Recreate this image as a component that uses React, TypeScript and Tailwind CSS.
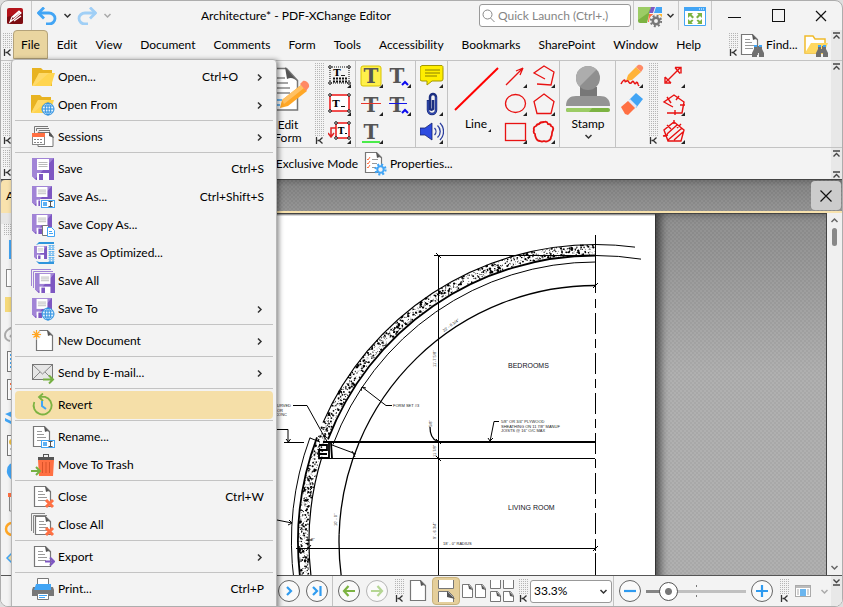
import { ReactNode } from "react";
import clsx from "clsx";

/* ---------- small shared drawings ---------- */

function Icon({ children, size = 24 }: { children: ReactNode; size?: number }) {
  return (
    <svg
      width={size}
      height={size}
      viewBox={`0 0 ${size} ${size}`}
      fill="none"
      className="block shrink-0"
      aria-hidden="true"
    >
      {children}
    </svg>
  );
}

function Chevron({ className = "", stroke = "#333" }) {
  return (
    <svg width="9" height="9" viewBox="0 0 9 9" fill="none" className={clsx("shrink-0", className)}>
      <path d="M1.5 3l3 3 3-3" stroke={stroke} strokeWidth="1.5" />
    </svg>
  );
}

function Grip({ className = "" }) {
  return (
    <div className={clsx("w-[10px] shrink-0 flex flex-col items-center", className)}>
      <div className="w-[9px] flex-1 bg-[conic-gradient(transparent_0_75%,#a6a6a6_75%)] bg-[length:2px_2px] opacity-80" />
      <svg width="9" height="9" viewBox="0 0 9 9" fill="none">
        <path d="M1.5 1v7M7.500 1.500l-3.200 3 3.200 3M4 4.500H2.500" stroke="#333" strokeWidth="1.3" />
      </svg>
    </div>
  );
}

function Separator() {
  return <div className="w-px shrink-0 self-stretch ml-px mr-[2px] bg-[#c3c3c3]" />;
}

function Floppy({ x = 1, y = 1, s = 22 }) {
  return (
    <g transform={`translate(${x} ${y}) scale(${s / 22})`}>
      <path d="M0 0h22v22H4l-4-4z" fill="#7e57c2" />
      <path d="M0 0h22L3 21l-3-3z" fill="#a184d6" />
      <path d="M5 1h12v11H5z" fill="#fff" />
      <path d="M6.500 4.500h9M6.500 6.500h9M6.500 8.500h9" stroke="#b9b9b9" />
      <path d="M5 15h12v7H5z" fill="#fff" />
      <path d="M7 16h4v6H7z" fill="#7e57c2" />
    </g>
  );
}

function Globe({ x = 17, y = 17 }) {
  return (
    <g transform={`translate(${x} ${y})`} stroke="#2b8fe0" strokeWidth="1">
      <circle r="6" fill="#e6f3fd" />
      <ellipse rx="2.800" ry="6" />
      <path d="M-6 0H6M0-6V6M-5-3H5M-5 3H5" />
    </g>
  );
}

function Sheet({ x = 2, y = 1, w = 17, h = 21, lines = true }) {
  return (
    <g transform={`translate(${x} ${y})`}>
      <path d={`M.5 .5h${w - 6}l5 5v${h - 6}H.5z`} fill="#fff" stroke="#777" strokeWidth="1.200" />
      <path d={`M${w - 6} 0l6 7c-2-2-3-2-5-1z`} fill="#555" />
      {lines && <path d={`M4 5.500h5M4 8.500h7M4 11.500h9M4 14.500h8`} stroke="#999" />}
    </g>
  );
}

function RenameBox() {
  return (
    <g>
      <rect x="10.500" y="15.500" width="13" height="7" fill="#fff" stroke="#42a5f5" />
      <path d="M12 17h4v4h-4z" fill="#5fb0f3" />
      <path d="M17.500 16.500h4M19.500 16.500v5M17.500 21.500h4" stroke="#555" />
    </g>
  );
}

function RedCross() {
  return <path d="M15 15l7 7M22 15l-7 7" stroke="#ff7043" strokeWidth="3" />;
}

function FolderShape() {
  return (
    <g>
      <path d="M1 3h9l2 2h9v16H1z" fill="#e8b321" />
      <path d="M1 21L8 8h16l-4 13z" fill="#ffd54f" />
      <path d="M1 21L8 8h10L3 21z" fill="#ffe082" opacity=".5" />
    </g>
  );
}

function Binoculars({ x = 12, y = 12 }) {
  return (
    <g transform={`translate(${x} ${y})`}>
      <path d="M2 1h3v3h1V1h4v3l2 4v4H7V8H5v4H0V8l2-4z" fill="#707070" />
      <path d="M2 0h3v2H2zM7 0h3v2H7z" fill="#42a5f5" />
    </g>
  );
}

/* ---------- File menu ---------- */

const menuIcons: Record<string, ReactNode> = {
  open: <FolderShape />,
  openFrom: (
    <>
      <g transform="translate(-1 -1)"><FolderShape /></g>
      <Globe x={17} y={16} />
    </>
  ),
  sessions: (
    <>
      <path d="M3.500 8V1.500H17M5.500 6V3.500H18M8 6.500V5.500H19" stroke="#777" />
      <path d="M7 7.500h12l3 4V21.500H7z" fill="#fff" stroke="#777" />
      <path d="M18 6l5 7-5-2z" fill="#555" />
      <rect x="1.500" y="8.500" width="12" height="11" fill="#fff" stroke="#888" />
      <path d="M1 8h13v4H1z" fill="#ff7043" />
      <path d="M3 14.500h9M3 17.500h9" stroke="#888" strokeDasharray="2 1" />
    </>
  ),
  save: <Floppy />,
  saveAs: (
    <>
      <Floppy s={20} />
      <path d="M9 14h15v10H9z" fill="#f3f3f3" />
      <RenameBox />
    </>
  ),
  saveCopy: (
    <>
      <Floppy s={20} />
      <path d="M11.500 12.500h5l3 3v7h-8z" fill="#fff" stroke="#777" />
      <path d="M16.500 14.500h4l3 3v6h-7z" fill="#fff" stroke="#42a5f5" />
      <path d="M18 18.500h3M18 20.500h4" stroke="#42a5f5" />
    </>
  ),
  optimized: (
    <>
      <path d="M5 4l3-3h15v2H8zM5 20l3 3h15v-2H8z" fill="#2f95dc" />
      <Floppy x={3} y={5} s={13} />
      <path d="M20.500 4v17" stroke="#8ec9f5" strokeWidth="6" strokeDasharray="1 1" />
      <path d="M19 4v17M22 4v17" stroke="#3f9fe4" strokeDasharray="2 1" />
    </>
  ),
  saveAll: (
    <>
      <path d="M.5 17V.5H20M2.500 19V2.500H22" stroke="#a184d6" />
      <Floppy x={4} y={4} s={20} />
    </>
  ),
  saveTo: (
    <>
      <Floppy s={20} />
      <Globe x={17} y={17} />
    </>
  ),
  newDoc: (
    <>
      <Sheet x={5} y={1} w={17} h={21} lines={false} />
      <circle cx="5.500" cy="5.500" r="5" fill="#f3f3f3" />
      <path d="M5.500 1v9M1 5.500h9M2.500 2.500l6 6M8.500 2.500l-6 6" stroke="#ffa726" strokeWidth="1.200" />
    </>
  ),
  mail: (
    <>
      <rect x="1.500" y="3.500" width="20" height="15" fill="#e6e6e6" stroke="#777" />
      <path d="M2 4l9.500 9L21 4M2 18l7-7M21 18l-7-7" stroke="#888" />
      <path d="M12 18.500h10M18 14.500l4 4-4 4" stroke="#76b043" strokeWidth="2" />
    </>
  ),
  revert: (
    <>
      <path d="M3.300 9A9 9 0 1 0 14 3.800H8" stroke="#7cb342" strokeWidth="1.800" />
      <path d="M12 .5L8 4l4 4" stroke="#7cb342" strokeWidth="1.800" />
      <path d="M11 8v5l4 3" stroke="#42a5f5" strokeWidth="2" />
    </>
  ),
  rename: (
    <>
      <Sheet />
      <RenameBox />
    </>
  ),
  trash: (
    <>
      <path d="M7 4h16v3H7zM12 1h6v3h-6z" fill="#555" />
      <path d="M13 2h4v2h-4z" fill="#f3f3f3" />
      <path d="M7 7h16l-1 16H8z" fill="#ff7043" />
      <path d="M11.500 9v11M15 9v11M18.500 9v11" stroke="#d9532a" />
      <path d="M0 18h9M5 14l4 4-4 4" stroke="#76b043" strokeWidth="2" />
    </>
  ),
  close: (
    <>
      <Sheet x={3} />
      <RedCross />
    </>
  ),
  closeAll: (
    <>
      <path d="M.5 18V.5H14M2.500 20V2.500H16" stroke="#888" />
      <Sheet x={4} y={3} w={16} h={19} />
      <RedCross />
    </>
  ),
  exportDoc: (
    <>
      <Sheet x={3} />
      <path d="M14 16.500h9M19 12.500l4 4-4 4" stroke="#7e57c2" strokeWidth="2" />
    </>
  ),
  print: (
    <>
      <path d="M6.500 1.500h11v8h-11z" fill="#fff" stroke="#777" />
      <path d="M2 10h20l1 3v6H1v-6z" fill="#777" />
      <path d="M5 7h15v6H3z" fill="#42a5f5" />
      <path d="M6.500 16.500h11v6h-11z" fill="#fff" stroke="#777" />
      <path d="M8 18.500h8M8 20.500h6" stroke="#42a5f5" />
    </>
  ),
};

type Item = { icon: string; label: string; keys?: string; sub?: boolean; active?: boolean };

const fileMenu: Item[][] = [
  [
    { icon: "open", label: "Open...", keys: "Ctrl+O", sub: true },
    { icon: "openFrom", label: "Open From", sub: true },
  ],
  [{ icon: "sessions", label: "Sessions", sub: true }],
  [
    { icon: "save", label: "Save", keys: "Ctrl+S" },
    { icon: "saveAs", label: "Save As...", keys: "Ctrl+Shift+S" },
    { icon: "saveCopy", label: "Save Copy As..." },
    { icon: "optimized", label: "Save as Optimized..." },
    { icon: "saveAll", label: "Save All" },
    { icon: "saveTo", label: "Save To", sub: true },
  ],
  [{ icon: "newDoc", label: "New Document", sub: true }],
  [{ icon: "mail", label: "Send by E-mail...", sub: true }],
  [{ icon: "revert", label: "Revert", active: true }],
  [
    { icon: "rename", label: "Rename..." },
    { icon: "trash", label: "Move To Trash" },
  ],
  [
    { icon: "close", label: "Close", keys: "Ctrl+W" },
    { icon: "closeAll", label: "Close All" },
  ],
  [{ icon: "exportDoc", label: "Export", sub: true }],
  [{ icon: "print", label: "Print...", keys: "Ctrl+P" }],
];

function FileMenu() {
  return (
    <div
      role="menu"
      className="absolute z-20 left-[10px] top-[58px] -bottom-5 w-[266px] overflow-hidden rounded-t border border-[#b5b5b5] bg-[#f3f3f3] px-[3px] pt-[3px] shadow-[2px_1px_5px_rgba(0,0,0,0.45)]"
    >
      {fileMenu.map((group, i) => (
        <div key={i}>
          {i > 0 && <div className="h-px my-px mb-[2px] bg-[#c3c3c3]" />}
          {group.map((item) => (
            <button
              key={item.label}
              role="menuitem"
              className={clsx(
                "flex h-7 w-full items-center rounded-sm pl-4 pr-[9px] text-left",
                item.active ? "bg-[#f5dfa8]" : "hover:bg-[#f5dfa8]",
              )}
            >
              <Icon>{menuIcons[item.icon]}</Icon>
              <span className="ml-[3px] flex-1">{item.label}</span>
              {item.keys && <span>{item.keys}</span>}
              {item.sub && <Chevron className="ml-[17px] -rotate-90" />}
            </button>
          ))}
        </div>
      ))}
    </div>
  );
}

/* ---------- title bar and menu bar ---------- */

function TitleBar() {
  return (
    <header className="flex h-[29px] shrink-0 items-center">
      <div className="flex w-[200px] shrink-0 items-center self-stretch">
        <svg width="16" height="16" viewBox="0 0 16 16" className="ml-[6px] mr-[8px]">
          <rect width="16" height="16" rx="2" fill="#b3131b" />
          <path d="M0 9L16 4v10a2 2 0 0 1-2 2H2a2 2 0 0 1-2-2z" fill="#7c0d12" />
          <path d="M3 14l2-5 7-6 2 2-7 6zM7 13l7-5M6 9.500L13 4" stroke="#fff" strokeWidth="1.200" fill="none" />
        </svg>
        <div className="h-full w-px bg-[#c8c8c8]" />
        <button aria-label="Undo" className="ml-[5px]">
          <svg width="20" height="18" viewBox="0 0 20 18" fill="none">
            <path d="M1 6h11a6 5.500 0 0 1 0 11H9" stroke="#42a5f5" strokeWidth="2.800" />
            <path d="M7 .5L1.500 6 7 11.500" stroke="#42a5f5" strokeWidth="2.800" />
          </svg>
        </button>
        <Chevron className="ml-[6px]" />
        <button aria-label="Redo" className="ml-[5px]">
          <svg width="20" height="18" viewBox="0 0 20 18" fill="none">
            <path d="M19 6H8a6 5.500 0 0 0 0 11h3" stroke="#a0cff6" strokeWidth="2.800" />
            <path d="M13 .5L18.500 6 13 11.500" stroke="#a0cff6" strokeWidth="2.800" />
          </svg>
        </button>
        <Chevron className="ml-[6px]" stroke="#aaa" />
      </div>
      <h1 className="flex-1 truncate">Architecture* - PDF-XChange Editor</h1>
      <label className="flex h-[23px] w-[152px] shrink-0 items-center gap-[3px] rounded-[3px] border border-[#999] bg-white px-[2px]">
        <svg width="13" height="14" viewBox="0 0 13 14" fill="none" className="shrink-0">
          <circle cx="5.500" cy="5.500" r="4.500" stroke="#888" />
          <path d="M8.500 9l4 4" stroke="#888" />
        </svg>
        <input
          aria-label="Quick Launch"
          placeholder="Quick Launch (Ctrl+.)"
          className="min-w-0 flex-1 bg-transparent outline-none placeholder:text-[#858585]"
        />
      </label>
      <div className="ml-[2px] h-full w-px bg-[#c8c8c8]" />
      <button aria-label="UI options" className="ml-[4px] flex items-center gap-[4px]">
        <Icon>
          <path d="M0 3h13L9 19H2a2 2 0 0 1-2-2z" fill="#7cb342" />
          <path d="M0 3h13l-3 6L0 16z" fill="#9ccc65" />
          <path d="M13 3h4l-2 6h-4z" fill="#7e57c2" />
          <path d="M18 3h6v6h-8z" fill="#42a5f5" />
          <path d="M11 10h4l-2 8h-3z" fill="#ff7043" />
          <path d="M16 10h8v4h-9z" fill="#ffb62e" />
          <circle cx="18" cy="17" r="4.500" stroke="#f3f3f3" strokeWidth="5" />
          <circle cx="18" cy="17" r="5.200" stroke="#777" strokeWidth="2" strokeDasharray="2 2.080" />
          <circle cx="18" cy="17" r="3.200" stroke="#777" strokeWidth="2.500" fill="#f3f3f3" />
        </Icon>
        <Chevron />
      </button>
      <div className="ml-[3px] h-full w-px bg-[#c8c8c8]" />
      <button aria-label="Full screen" className="mx-[4px]">
        <Icon>
          <path d="M1.500 4.500h21v17h-21z" fill="#fff" stroke="#42a5f5" />
          <path d="M1 3h22v4H1z" fill="#42a5f5" />
          <path d="M16 5h1M18 5h1M20 5h1" stroke="#fff" />
          <path
            d="M5 9h5L8.500 10.500 11 13l-1.500 1.500L7 12l-2 2zM19 9h-5l1.500 1.500L13 13l1.500 1.500L17 12l2 2zM5 20h5l-1.500-1.500L10.500 16.500 9 15.500 7 17l-2-2zM19 20h-5l1.500-1.500L13.500 16.500l1.500-1L17 17l2-2z"
            fill="#7cb342"
          />
        </Icon>
      </button>
      <div className="h-full w-px bg-[#c8c8c8]" />
      <button aria-label="Minimize" className="flex w-11 justify-center pt-[7px]">
        <Icon size={13}><path d="M0 4.500h13" stroke="#111" /></Icon>
      </button>
      <button aria-label="Maximize" className="flex w-11 justify-center">
        <Icon size={13}><rect x=".5" y=".5" width="12" height="12" stroke="#111" /></Icon>
      </button>
      <button aria-label="Close window" className="flex w-[42px] justify-center">
        <Icon size={12}><path d="M1 1l10 10M11 1L1 11" stroke="#111" strokeWidth="1.200" /></Icon>
      </button>
    </header>
  );
}

const menus = [
  "File", "Edit", "View", "Document", "Comments", "Form", "Tools",
  "Accessibility", "Bookmarks", "SharePoint", "Window", "Help",
];

function Strip({ flip = false, className = "" }) {
  return (
    <button
      aria-label="More tools"
      className={clsx("flex w-[11px] shrink-0 justify-center bg-[#e8e8e8]", className)}
    >
      <svg width="9" height="8" viewBox="0 0 9 8" fill="none" className={clsx("mt-[2px]", flip && "rotate-180")}>
        <path d="M1 1h7M1.500 6.500l3-3 3 3" stroke="#444" strokeWidth="1.400" />
      </svg>
    </button>
  );
}

function MenuBar() {
  return (
    <nav className="flex h-[31px] shrink-0 items-stretch border-b border-[#c3c3c3]">
      <Grip className="ml-px py-[3px]" />
      <div className="ml-[2px] flex flex-1 pb-px">
        {menus.map((m) => (
          <button
            key={m}
            className={clsx(
              m === "File"
                ? "-ml-px rounded-t-sm border border-[#b3a27a] bg-[#e9d5a0] px-[7px]"
                : "px-[9px]",
            )}
          >
            {m}
          </button>
        ))}
      </div>
      <Grip className="py-[3px]" />
      <button className="ml-[2px] flex w-[64px] shrink-0 items-center gap-[2px]">
        <Icon>
          <Sheet x={1} y={1} />
          <Binoculars />
        </Icon>
        Find...
      </button>
      <button aria-label="Search" className="mr-[3px] flex items-center">
        <Icon>
          <path d="M1 3h8l2 3h10v14H1z" fill="#fff" stroke="#f0bb2b" strokeWidth="1.500" />
          <path d="M1 20l6-10h17l-4 10z" fill="#ffd861" />
          <Binoculars />
        </Icon>
      </button>
      <Strip />
    </nav>
  );
}

/* ---------- ribbon ---------- */

const corner = <path d="M23 20v4h-4z" fill="#222" stroke="none" />;

function Tool({ label, children, more = true }: { label: string; children: ReactNode; more?: boolean }) {
  return (
    <button aria-label={label} className="flex size-7 items-center justify-center">
      <Icon>
        {children}
        {more && corner}
      </Icon>
    </button>
  );
}

function Tee({ x = 11, y = 20, size = 22, fill = "#555" }) {
  return (
    <text x={x} y={y} textAnchor="middle" fontSize={size} fontWeight="bold" fill={fill} fontFamily="DejaVu Serif, serif">
      T
    </text>
  );
}

function Handles({ x = 2, y = 3, w = 19, h = 16 }) {
  return (
    <g fill="#fff" stroke="#111">
      {[[x, y], [x + w, y], [x, y + h], [x + w, y + h]].map(([cx, cy]) => (
        <circle key={`${cx}-${cy}`} cx={cx} cy={cy} r="1.300" />
      ))}
    </g>
  );
}

const caret = <path d="M14 21l3-3 3 3" stroke="#0a0af0" strokeWidth="2" />;

function Ribbon() {
  return (
    <section className="flex h-[87px] shrink-0 border-b border-[#c3c3c3]">
      <div className="flex w-[261px] shrink-0 py-[2px]">
        <Grip className="ml-px" />
      </div>
      <button className="flex w-[52px] shrink-0 flex-col items-center pt-[5px] leading-[13px]">
        <svg width="46" height="48" viewBox="0 0 46 48" fill="none">
          <path d="M1.500 2.500h20l11 12V44h-31z" fill="#fff" stroke="#777" strokeWidth="1.500" />
          <path d="M20 1l13 15c-4-4-7-5-11-3z" fill="#555" />
          <path d="M5 12h15M5 17h18M5 22h20M5 27h20" stroke="#888" strokeWidth="1.500" />
          <path d="M5 34h12M5 39h10" stroke="#42a5f5" strokeWidth="1.500" />
          <path d="M36 19l6 6-19 15-8 2 2-8z" fill="#ffa726" />
          <path d="M36 19l3 3-20 16-2-4z" fill="#ffc163" />
          <path d="M35 18l3-3c3-1 7 3 6 6l-3 4z" fill="#ff8a65" />
        </svg>
        <span className="mt-[4px] text-center">Edit<br />Form</span>
      </button>
      <Grip className="mr-[2px] py-[2px]" />
      <div className="flex w-7 shrink-0 flex-col pt-px">
        <Tool label="Typewriter">
          <rect x="2" y="3" width="19" height="16" stroke="#111" strokeDasharray="1 1" />
          <Tee x={9} y={12} size={10} fill="#000" />
          <path d="M13 11.500h4" stroke="#222" />
          <path d="M5 14.500h14M5 17.500h14" stroke="#111" strokeWidth="2" strokeDasharray="2 1" />
          <Handles />
        </Tool>
        <Tool label="Text box">
          <rect x="2" y="3" width="19" height="16" fill="#fff" stroke="#f01414" strokeWidth="1.500" />
          <Tee x={8} y={15} size={10} fill="#000" />
          <path d="M13 14.500h4" stroke="#111" />
          <Handles />
        </Tool>
        <Tool label="Callout">
          <rect x="8" y="3" width="13" height="15" fill="#fff" stroke="#f01414" strokeWidth="1.500" />
          <Tee x={13} y={14} size={9} fill="#000" />
          <path d="M17 13.500h2" stroke="#111" />
          <path d="M8 8H3v9M0 13l3 4 3-4" stroke="#d22" strokeWidth="1.500" />
          <Handles x={8} w={13} h={15} />
        </Tool>
      </div>
      <Separator />
      <div className="grid shrink-0 grid-cols-[28px_28px] grid-rows-[28px_28px_28px] pt-px">
        <Tool label="Highlight">
          <rect x="1" y="2" width="20" height="20" rx="2" fill="#fff04a" stroke="#d8c400" />
          <Tee y={19} size={20} />
        </Tool>
        <Tool label="Insert text">
          <Tee x={9} y={19} size={20} />
          {caret}
        </Tool>
        <Tool label="Strike out">
          <Tee y={20} size={20} />
          <path d="M1 11.500h20" stroke="#e8372b" strokeWidth="1.200" />
        </Tool>
        <Tool label="Replace text">
          <Tee x={9} y={20} size={20} />
          <path d="M1 11.500h18" stroke="#1414e8" strokeWidth="1.200" />
          {caret}
        </Tool>
        <Tool label="Underline">
          <Tee y={19} size={20} />
          <path d="M2 22h18" stroke="#12e812" strokeWidth="1.500" />
        </Tool>
      </div>
      <Separator />
      <div className="flex w-7 shrink-0 flex-col pt-px">
        <Tool label="Sticky note">
          <path d="M2 1.500h20a2 2 0 0 1 1 2V15a2 2 0 0 1-2 2h-9l-5 4v-4H2a2 2 0 0 1-2-2V3z" fill="#ffee00" stroke="#a39800" />
          <path d="M5 6h15M5 9h15M5 12h12" stroke="#8a8000" />
        </Tool>
        <Tool label="Attach file">
          <path d="M8 8v10a4 4 0 0 0 8 0V5a3 3 0 0 0-6 0v12a2 2 0 0 0 3 0V8" stroke="#1c2f80" strokeWidth="2.500" />
          <path d="M8 9v9a4 4 0 0 0 8 0V5" stroke="#4058c8" strokeWidth=".8" />
        </Tool>
        <Tool label="Sound">
          <path d="M0 8h5l7-5v17l-7-5H0z" fill="#2d4be0" stroke="#16256e" strokeWidth=".8" />
          <path d="M14.500 8a5 5 0 0 1 0 7M17.500 5.500a8 8 0 0 1 0 12M20 3a12 12 0 0 1 0 17" stroke="#2d3f9e" strokeWidth="1.300" />
        </Tool>
      </div>
      <Separator />
      <button className="relative flex w-[52px] shrink-0 flex-col items-center pt-[5px]">
        <svg width="46" height="46" viewBox="0 0 46 46" fill="none">
          <path d="M2 44L45 2" stroke="#f00" strokeWidth="2" />
        </svg>
        <span className="mt-[4px] leading-4">Line</span>
        <svg width="3" height="3" className="absolute bottom-[15px] right-[11px]"><path d="M3 0v3H0z" fill="#222" /></svg>
      </button>
      <div className="grid shrink-0 grid-cols-[28px_28px] grid-rows-[28px_28px_28px] pt-px [&_svg]:stroke-[#e81212] [&_svg]:stroke-[1.3]">
        <Tool label="Arrow">
          <path d="M2 21L19 4M19 4l-7 3M19 4l-3 7" />
        </Tool>
        <Tool label="Polyline">
          <path d="M13 15L2 9l10-7 10 6-3 13-14-1" />
        </Tool>
        <Tool label="Oval"><ellipse cx="11.500" cy="11.500" rx="10" ry="9" /></Tool>
        <Tool label="Polygon"><path d="M12 2l10 7.500-3 12H5l-3-12z" /></Tool>
        <Tool label="Rectangle"><rect x="1.500" y="3.500" width="20" height="17" /></Tool>
        <Tool label="Cloud">
          <path
            d="M12 2q3-1 4 2 3 0 3 2 3 1 2 4-1 2-1 3 0 3-1 4 0 3-3 4-2 1-4 0-2 1-4 0-3 0-4-3-1-2-1-4-2-1-1-4-1-3 2-4 1-2 3-2 1-2 5-2z"
            strokeWidth="1.800"
          />
        </Tool>
      </div>
      <Separator />
      <button className="flex w-[52px] shrink-0 flex-col items-center pt-[4px]">
        <svg width="46" height="48" viewBox="0 0 46 48">
          <path d="M15 22h17v12H15z" fill="#777" />
          <circle cx="23" cy="13" r="12" fill="#8f8f8f" />
          <path d="M14.500 21.500A12 12 0 0 1 31.500 4.500z" fill="#adadad" />
          <path d="M1 41c0-7 4-10 10-10h24c6 0 10 3 10 10z" fill="#949494" />
          <rect x="1" y="43" width="44" height="4" rx="2" fill="#7cb342" />
          <path d="M3 43h24l-3 4H3a2 2 0 0 1 0-4z" fill="#9ccc65" />
        </svg>
        <span className="mt-[3px] leading-4">Stamp</span>
        <Chevron />
      </button>
      <Separator />
      <div className="flex w-7 shrink-0 flex-col pt-px">
        <Tool label="Pencil">
          <path d="M16 3l5 5L12 16l-6 1 2-6z" fill="#ffb338" />
          <path d="M16 3l2-2c3-1 6 2 5 4l-2 3z" fill="#ff8a65" />
          <path d="M1 20c2-4 4-5 4-3s2-1 3 0 2 4 4 1 2 4 4 1 2 4 3 2" stroke="#e81212" strokeWidth="1.500" />
        </Tool>
        <Tool label="Eraser" more={false}>
          <path d="M9 8l7-7 7 6-7 9z" fill="#42a5f5" />
          <path d="M7 10l3-3 7 7-3 4z" fill="#e3e8f5" />
          <path d="M1 15l7-6 7 7-7 7-3-1z" fill="#ff7043" />
        </Tool>
      </div>
      <Grip className="ml-[2px] mr-[2px] py-[2px]" />
      <div className="flex w-7 shrink-0 flex-col pt-px [&_svg]:stroke-[#e81212] [&_svg]:stroke-[1.4]">
        <Tool label="Distance">
          <path d="M4 18L18 4M13 3.500h6v6M9 19H3v-6M13 3.500l5 6M3 13l6 6" />
        </Tool>
        <Tool label="Perimeter">
          <path d="M11 15L2 10l10-7 10 7-2 11H5M5 5l4 6M17 4l-3 4M18 13h5M13 18v5" />
        </Tool>
        <Tool label="Area">
          <path d="M12 2l10 8-3 11H6L2 10zM5 14l10-9M6 20L20 8M12 20l9-8M5 5l4 4M19 4l-4 4M1 16l5-1M12 0v4" />
        </Tool>
      </div>
      <div className="flex-1" />
      <Strip />
    </section>
  );
}

function PropertiesBar() {
  return (
    <section className="flex h-8 shrink-0 border-b border-[#444]">
      <div className="flex w-[357px] shrink-0 items-center">
        <Grip className="ml-px self-stretch py-[2px]" />
        <span className="flex-1 text-right">Exclusive Mode</span>
      </div>
      <button className="ml-[5px] flex items-center gap-[3px]">
        <Icon>
          <Sheet x={2} y={0} lines={false} />
          <path d="M9 7.500h6M9 11.500h5M9 15.500h4" stroke="#999" />
          <path d="M4 7l1 1 2-3M4 11l1 1 2-3M4 15l1 1 2-3" stroke="#ff7043" />
          <circle cx="17.500" cy="17.500" r="5" stroke="#42a5f5" strokeWidth="2.200" strokeDasharray="2 1.930" />
          <circle cx="17.500" cy="17.500" r="3.200" fill="#f3f3f3" stroke="#42a5f5" strokeWidth="2" />
        </Icon>
        Properties...
      </button>
      <div className="flex-1" />
      <div className="flex flex-col justify-between bg-[#e8e8e8]">
        <Strip />
        <Strip />
      </div>
    </section>
  );
}

/* ---------- drawing sheet ---------- */

const CX = 595.5;
const CY = 542;

// speckles of the concrete shell, spread along the arc
const speckles = (() => {
  let seed = 7;
  const rnd = () => (seed = (seed * 16807) % 2147483647) / 2147483647;
  return Array.from({ length: 1300 }, () => {
    const a = Math.PI / 2 + rnd() * 1.7;
    const r = 287.5 + rnd() * 9.5;
    return { x: CX + r * Math.cos(a), y: CY - r * Math.sin(a), s: 0.3 + rnd() * rnd() * 1.1 };
  });
})();

function arc(r: number, x1: number, x2: number) {
  const y = (x: number) => CY - Math.sqrt(r * r - (x - CX) * (x - CX));
  return `M${x1} ${y(x1)}A${r} ${r} 0 0 1 ${x2} ${y(x2)}`;
}

function lowerArc(r: number, x: number) {
  const y = CY - Math.sqrt(r * r - (x - CX) * (x - CX));
  return `M${x} ${y}A${r} ${r} 0 0 0 ${CX - Math.sqrt(r * r - 1600)} 582`;
}

function Drawing() {
  return (
    <svg
      viewBox="27 214 629 361"
      className="block h-[361px] w-[629px] shrink-0 bg-white"
      fill="none"
      stroke="#000"
    >
      <path d={arc(297.5, CX, 635)} />
      <path d={arc(286.5, CX, 641)} />
      <path d={arc(297.5, 323, CX)} strokeWidth="1.200" />
      <path d={arc(286.5, 328, CX)} strokeWidth="1.800" />
      <path d={arc(280, 333, CX)} />
      <path d={lowerArc(304, 310)} />
      <path d={lowerArc(297.5, 317)} strokeWidth="1.800" />
      <path d={lowerArc(286.5, 322)} strokeWidth="1.200" />
      <path d={arc(256.5, 339.1, CX)} strokeWidth="1.300" />
      <path d={lowerArc(256.5, 339.1)} strokeWidth="1.300" />
      <g fill="#000" stroke="none">
        {speckles.map((p, i) => (
          <circle key={i} cx={p.x} cy={p.y} r={p.s} />
        ))}
      </g>
      <path d="M595.500 235v58M595.500 299v9M595.500 313v21M595.500 339v9M595.500 353v21M595.500 379v9M595.500 393v21M595.500 419v9M595.500 433v21M595.500 459v9M595.500 473v21M595.500 499v9M595.500 513v21M595.500 539v12M595.500 553v22" />
      <path d="M434 255.500h161M438.500 255v320M325 458.500h270M296 548.500h299" />
      <path d="M323 442h272" strokeWidth="2" />
      <path d="M593 288l5-5M593 551l5-5M436 253l5 5M436 456l5 5M436 439l5 5M298 546l6 5M306 551l5-6" />
      <path d="M310 438l10 4" />
      <path d="M319 445h8v5h-8v8h10M319 454h8M329 443v15M331 443l1 15" strokeWidth="1.800" />
      <path d="M293 405.500h14l20 36M277 429.500h11v13M286 439l2.500 3 2-3M284 442.500h20" />
      <path d="M332 445l24 9M352 451l3 6M277 520l15 3M289 520l3 3-4 2" />
      <path d="M362 387l24 18.500h6M361 391l1-4 4 1" />
      <path d="M499 421.500h-5l-4 20M488 438l2 3 3-3" />
      <path d="M430 427c0 8 2 12 7 14" strokeWidth="1.300" />
      <path d="M306 540h6" />
      <path d="M655.500 214v361" stroke="#333" />
      <path d="M27 214.500h628" stroke="#999" />
      <path d="M27 215.500h628" stroke="#d8d8d8" />
      <g fill="#222" stroke="none" fontFamily="Liberation Sans, sans-serif" fontSize="4">
        <g fontSize="7" fill="#112">
          <text x="508" y="368">BEDROOMS</text>
          <text x="508" y="510">LIVING ROOM</text>
        </g>
        <text x="393" y="407">FORM SET #3</text>
        <text x="501" y="423">5/8" OR 3/4" PLYWOOD</text>
        <text x="501" y="428">SHEATHING ON 11 7/8" MANUF</text>
        <text x="501" y="432">JOISTS @ 16" O/C MAX</text>
        <text x="291" y="407" textAnchor="end">CURVED</text>
        <text x="277" y="412">OR</text>
        <text x="287" y="416" textAnchor="end">CONC</text>
        <text x="443" y="545">18' - 0" RADIUS</text>
        <text x="311" y="541">8"</text>
        <text transform="translate(436 367) rotate(-90)">11'-7 5/8"</text>
        <text transform="translate(444 332) rotate(-36)">22' - 0 3/4"</text>
        <text transform="translate(432 427) rotate(-90)">5/8"</text>
        <text transform="translate(436 457) rotate(-90)">11 7/8"</text>
        <text transform="translate(436 539) rotate(-90)">9' - 6 3/4"</text>
        <text transform="translate(337 526) rotate(-90)">10' - 0"</text>
      </g>
    </svg>
  );
}

/* ---------- navigation panes at the left edge ---------- */

function NavPane() {
  return (
    <aside className="w-[26px] shrink-0 overflow-hidden bg-[#f3f3f3]">
      <div className="h-[11px] bg-[#e6e6e6]" />
      <div className="ml-[3px] h-3 bg-[conic-gradient(transparent_0_75%,#a6a6a6_75%)] bg-[length:2px_2px] opacity-80" />
      <div className="flex flex-col items-center gap-[4px] pt-[2px] pl-[4px]">
        <Icon><path d="M5 2h14v19H5z" fill="#42a5f5" /></Icon>
        <Icon><rect x="2.500" y="3.500" width="18" height="17" fill="#fff" stroke="#888" /></Icon>
        <Icon><path d="M1 3h20v15h-9l-4 4v-4H1z" fill="#f5d97a" /></Icon>
        <Icon><path d="M6 19c-7-2-6-9-1-12l8-4M6 15l7-8" stroke="#aaa" strokeWidth="2" /></Icon>
        <Icon><rect x="3.500" y="1.500" width="17" height="20" fill="#fff" stroke="#777" /><path d="M6 5h4M6 9h4M6 13h4M6 17h4" stroke="#42a5f5" strokeWidth="2" /></Icon>
        <Icon><rect x="3.500" y="1.500" width="17" height="20" fill="#fff" stroke="#777" /><path d="M6 6h4M6 11h4" stroke="#ff7043" strokeWidth="2" /></Icon>
        <Icon><path d="M1 8l10-4 11 4-11 5zM1 12l10 5 11-5v3l-11 5-10-5z" fill="#42a5f5" /></Icon>
        <Icon><rect x="3.500" y="1.500" width="17" height="20" fill="#fff" stroke="#777" /><circle cx="8" cy="8" r="3" fill="#f0c040" /><path d="M6 15h10" stroke="#888" /></Icon>
        <Icon><path d="M12 22C5 16 2 12 3 8a9 8 0 0 1 18 0c1 4-3 8-9 14z" fill="#42a5f5" /></Icon>
        <Icon><path d="M4 3h14v4H4z" fill="#ff7043" /><path d="M5.500 7v14H18" stroke="#888" /></Icon>
        <Icon><path d="M16 5H8a5 5 0 0 0 0 12h8" stroke="#ffa726" strokeWidth="2.500" /></Icon>
        <Icon><path d="M3 12l8-8 8 8-8 8z" fill="#f5dfa8" stroke="#42a5f5" strokeWidth="1.500" /></Icon>
      </div>
    </aside>
  );
}

/* ---------- status bar ---------- */

function Round({ label, children, faded = false }: { label: string; children: ReactNode; faded?: boolean }) {
  return (
    <button aria-label={label} className="flex w-7 shrink-0 items-center justify-center">
      <span
        className={clsx(
          "flex size-[22px] items-center justify-center rounded-full border bg-white/60",
          faded ? "border-[#b5b5b5]" : "border-[#666]",
        )}
      >
        <Icon size={16}>{children}</Icon>
      </span>
    </button>
  );
}

function MiniSheet({ x = 0, y = 0, w = 11, h = 14 }) {
  return (
    <g transform={`translate(${x} ${y})`}>
      <path d={`M.5 .5h${w - 4}l3 4v${h - 5}H.5z`} fill="#fff" stroke="#777" />
      <path d={`M${w - 5} 0l5 6-4-1z`} fill="#555" />
    </g>
  );
}

function StatusBar() {
  return (
    <footer className="flex h-[31px] shrink-0 border-t border-[#555] bg-[#f3f3f3]">
      <div className="w-[274px] shrink-0" />
      <Round label="Next page"><path d="M6 4l4 4-4 4" stroke="#2f9bf0" strokeWidth="2.200" /></Round>
      <Round label="Last page"><path d="M4 4l4 4-4 4M11.500 3v10" stroke="#2f9bf0" strokeWidth="2.200" /></Round>
      <Separator />
      <Round label="Back"><path d="M14 8H3M7.500 3L3 8l4.500 5" stroke="#7cb342" strokeWidth="2.200" /></Round>
      <Round label="Forward" faded><path d="M2 8h11M8.500 3L13 8l-4.500 5" stroke="#b5d694" strokeWidth="2.200" /></Round>
      <Grip className="ml-[3px] py-[3px]" />
      <button aria-label="Single page" className="flex w-7 items-center justify-center">
        <Icon><Sheet x={4} y={1} w={16} lines={false} /></Icon>
      </button>
      <button aria-label="Continuous" className="my-px flex w-7 items-center justify-center rounded-sm border border-[#c9b27c] bg-[#e5cf9b]">
        <Icon>
          <path d="M4.500 1v8.500h15V1M4.500 23v-10.500h10l5 5V23" fill="#fff" stroke="#777" />
          <path d="M13 12l8 8-8-2z" fill="#555" />
        </Icon>
      </button>
      <button aria-label="Two pages" className="flex w-7 items-center justify-center">
        <Icon><MiniSheet x={0} y={5} /><MiniSheet x={13} y={5} /></Icon>
      </button>
      <button aria-label="Two pages continuous" className="flex w-7 items-center justify-center">
        <Icon>
          <path d="M.5 1v8.500h10V1M13.500 1v8.500h10V1" fill="#fff" stroke="#777" />
          <MiniSheet x={0} y={12} h={11} /><MiniSheet x={13} y={12} h={11} />
        </Icon>
      </button>
      <Grip className="ml-[2px] py-[3px]" />
      <div className="relative ml-[2px] flex items-center">
        <select
          aria-label="Zoom level"
          className="h-[23px] w-[82px] appearance-none rounded-[3px] border border-[#999] bg-white pl-[3px] outline-none"
        >
          <option>33.3%</option>
        </select>
        <Chevron className="pointer-events-none absolute right-[4px]" />
      </div>
      <Separator />
      <Round label="Zoom out"><path d="M2 8h12" stroke="#2f9bf0" strokeWidth="2.200" /></Round>
      <div className="mx-[2px] flex w-[100px] items-center bg-[linear-gradient(#777,#777),linear-gradient(#777,#777)] bg-[length:1px_2px,1px_2px] bg-[position:50px_9px,50px_19px] bg-no-repeat">
        <input
          aria-label="Zoom"
          type="range"
          min="0"
          max="100"
          defaultValue="16"
          className="h-[18px] w-full appearance-none bg-[linear-gradient(90deg,#858585_20%,#c0c0c0_20%)] bg-[length:100%_3px] bg-center bg-no-repeat [&::-webkit-slider-thumb]:size-[19px] [&::-webkit-slider-thumb]:appearance-none [&::-webkit-slider-thumb]:rounded-full [&::-webkit-slider-thumb]:border [&::-webkit-slider-thumb]:border-[#555] [&::-webkit-slider-thumb]:bg-[radial-gradient(circle,#777_3px,#fff_4px)]"
        />
      </div>
      <Round label="Zoom in"><path d="M2 8h12M8 2v12" stroke="#2f9bf0" strokeWidth="2.200" /></Round>
      <div className="flex-1" />
      <Grip className="py-[3px]" />
      <button aria-label="View mode" className="ml-[6px] mr-[2px] flex shrink-0 items-center gap-[9px]">
        <Icon size={16}>
          <rect x=".5" y="2.500" width="15" height="11" fill="#fff" stroke="#aaa" />
          <path d="M1 3h14v2H1z" fill="#bbb" />
          <path d="M5 6h6v7H5z" fill="#6cb6ef" />
          <path d="M2 7h2M2 9h2M2 11h2M12 7h2M12 9h2M12 11h2" stroke="#aaa" />
        </Icon>
        <Chevron stroke="#aaa" />
      </button>
      <Strip flip className="items-start" />
    </footer>
  );
}

const weave = "bg-[repeating-conic-gradient(#00000008_0_25%,#ffffff08_0_50%)] bg-[length:4px_4px]";

export default function App() {
  return (
    <div className="h-screen overflow-hidden bg-[#dedede] font-[Lato,'Open_Sans',sans-serif] text-xs text-black [font-variant-ligatures:none]">
      <div className="relative flex h-full flex-col overflow-hidden rounded-lg border border-[#adadad] bg-[#f3f3f3]">
        <TitleBar />
        <MenuBar />
        <Ribbon />
        <PropertiesBar />
        <div className="shrink-0 border-b-2 border-[#f8e2ad] bg-[linear-gradient(#6e6e6e,#838383_20%,#929292)]">
          <div className={clsx("flex h-[31px] items-center justify-between", weave)}>
            <button className="h-full w-40 rounded-tl bg-[#f8e2ad] px-[5px] text-left">Architecture *</button>
            <button aria-label="Close tab" className="mr-px flex h-[29px] w-[30px] items-center justify-center rounded-sm bg-[#cccccc]">
              <Icon size={12}><path d="M.5 .5l11 11M11.500 .5l-11 11" stroke="#111" strokeWidth="1.200" /></Icon>
            </button>
          </div>
        </div>
        <main className="flex min-h-0 flex-1">
          <NavPane />
          <div className="flex min-w-0 flex-1 border-t border-[#444] bg-[linear-gradient(#8c8c8c,#adadad_160px)]">
            <Drawing />
            <div className={clsx("flex-1 border-r border-[#444] shadow-[inset_10px_4px_10px_-6px_rgba(0,0,0,0.6)]", weave)} />
          </div>
          <div className="flex w-[15px] shrink-0 flex-col items-center justify-between bg-[#f0f0f0] py-[3px]">
            <div className="flex flex-col items-center gap-[3px]">
              <Chevron className="rotate-180" stroke="#666" />
              <div className="h-[18px] w-[5px] rounded-full bg-[#888]" />
            </div>
            <Chevron stroke="#666" />
          </div>
        </main>
        <StatusBar />
        <FileMenu />
      </div>
    </div>
  );
}
